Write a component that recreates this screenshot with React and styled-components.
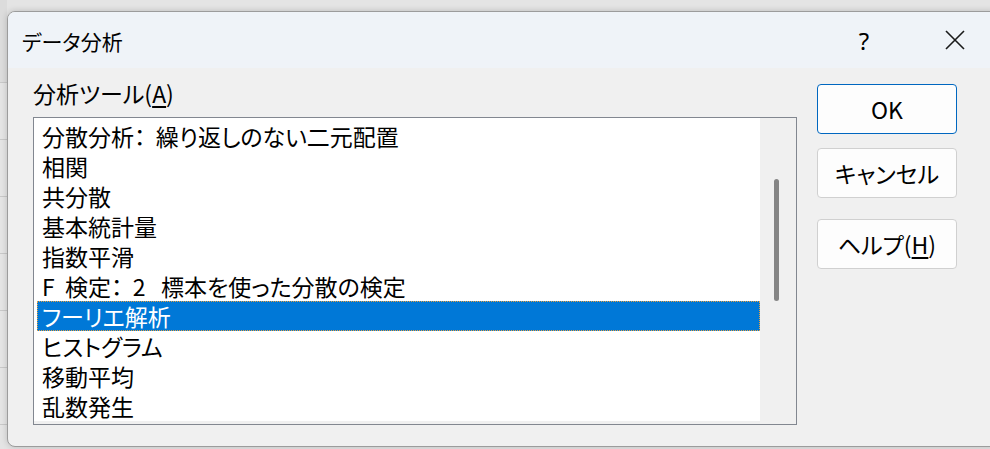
import React from 'react';
import styled, { createGlobalStyle } from 'styled-components';

const GlobalStyle = createGlobalStyle`
  html, body {
    margin: 0;
    padding: 0;
  }
  body {
    width: 990px;
    height: 449px;
    overflow: hidden;
    font-family: "Noto Sans CJK JP", "Noto Sans", sans-serif;
    font-feature-settings: "palt";
    color: #000;
  }
`;

// 背景 (Excelのシート)

const Sheet = styled.div`
  width: 990px;
  height: 449px;
  overflow: hidden;
  padding: 11px 0 0 7px;
  box-sizing: border-box;
  background-color: #e4e4e4;
  background-image:
    linear-gradient(to bottom, #dcdcdc 0, #dcdcdc 82px, transparent 82px),
    repeating-linear-gradient(to bottom, transparent 0, transparent 56px, #c8c8c8 56px, #c8c8c8 57px);
  background-size: 7px 100%, 7px 100%;
  background-position: 0 0, 0 26px;
  background-repeat: no-repeat;
`;

// ダイアログ

const Dialog = styled.div`
  width: 993px;
  height: 436px;
  box-sizing: border-box;
  border: 1px solid #9c9c9c;
  border-radius: 8px;
  overflow: hidden;
  background: #f0f0f0;
  box-shadow: 0 0 6px rgba(0, 0, 0, 0.18);
  display: flex;
  flex-direction: column;
`;

const TitleBar = styled.div`
  height: 56px;
  flex: none;
  display: flex;
  align-items: center;
  padding: 0 21px 0 14px;
  background: #eff3f8;
`;

const Title = styled.div`
  flex: 1;
  font-size: 21px;
  line-height: 30px;
  padding-top: 1px;
`;

const TitleButton = styled.div`
  width: 46px;
  height: 40px;
  display: flex;
  align-items: center;
  justify-content: center;
  font-family: "Noto Sans", sans-serif;
  font-size: 24px;
  margin-left: ${p => p.gap || 0}px;
`;

const Body = styled.div`
  flex: 1;
  display: flex;
  padding: 10px 0 0 25px;
`;

const LeftColumn = styled.div`
  display: flex;
  flex-direction: column;
`;

const Label = styled.div`
  font-size: 23px;
  line-height: 30px;
  margin-bottom: 9px;
`;

const Key = styled.span`
  text-decoration: underline;
  text-underline-offset: 3px;
  text-decoration-thickness: 2px;
`;

const ListBox = styled.div`
  width: 764px;
  height: 308px;
  box-sizing: border-box;
  border: 1px solid #828790;
  display: flex;
  align-items: flex-start;
  background: #f0f0f0;
`;

const List = styled.div`
  width: 726px;
  height: 303px;
  box-sizing: border-box;
  padding: 3px 0 0 3px;
  background: #fff;
`;

const Item = styled.div`
  height: 30px;
  box-sizing: border-box;
  padding-left: 5px;
  font-size: 23px;
  line-height: 30px;
  white-space: pre;
  background: ${p => (p.selected ? '#0078d7' : 'transparent')};
  color: ${p => (p.selected ? '#fff' : '#000')};
  outline: ${p => (p.selected ? '1px dotted #e8a040' : 'none')};
  outline-offset: -1px;
`;

const ScrollTrack = styled.div`
  flex: 1;
  align-self: stretch;
  display: flex;
  justify-content: center;
  padding: 61px 0 0 0;
  box-sizing: border-box;
`;

const Thumb = styled.div`
  width: 5px;
  height: 122px;
  border-radius: 3px;
  background: #858585;
  margin-right: 3px;
`;

const ButtonColumn = styled.div`
  display: flex;
  flex-direction: column;
  padding: 6px 0 0 20px;
`;

const Button = styled.div`
  width: 140px;
  height: 50px;
  box-sizing: border-box;
  margin-top: ${p => p.gap}px;
  border: 1px solid ${p => (p.primary ? '#0067c0' : '#d0d0d0')};
  border-radius: 4px;
  background: #fdfdfd;
  display: flex;
  align-items: center;
  justify-content: center;
  font-size: 23px;
  line-height: 30px;
`;

const tools = [
  '分散分析：  繰り返しのない二元配置',
  '相関',
  '共分散',
  '基本統計量',
  '指数平滑',
  'F  検定：  2   標本を使った分散の検定',
  'フーリエ解析',
  'ヒストグラム',
  '移動平均',
  '乱数発生',
];

function CloseIcon() {
  return (
    <svg width="22" height="22" viewBox="0 0 22 22">
      <path d="M2 2 L20 20 M20 2 L2 20" stroke="#1a1a1a" strokeWidth="1.6" fill="none" />
    </svg>
  );
}

class App extends React.Component {
  render() {
    return (
      <Sheet>
        <GlobalStyle />
        <Dialog>
          <TitleBar>
            <Title>データ分析</Title>
            <TitleButton>?</TitleButton>
            <TitleButton gap={45}>
              <CloseIcon />
            </TitleButton>
          </TitleBar>
          <Body>
            <LeftColumn>
              <Label>
                分析ツール(<Key>A</Key>)
              </Label>
              <ListBox>
                <List>
                  {tools.map((t, i) => (
                    <Item key={t} selected={i === 6}>
                      {t}
                    </Item>
                  ))}
                </List>
                <ScrollTrack>
                  <Thumb />
                </ScrollTrack>
              </ListBox>
            </LeftColumn>
            <ButtonColumn>
              <Button primary gap={0}>OK</Button>
              <Button gap={14}>キャンセル</Button>
              <Button gap={21}>
                ヘルプ(<Key>H</Key>)
              </Button>
            </ButtonColumn>
          </Body>
        </Dialog>
      </Sheet>
    );
  }
}

export default App;
